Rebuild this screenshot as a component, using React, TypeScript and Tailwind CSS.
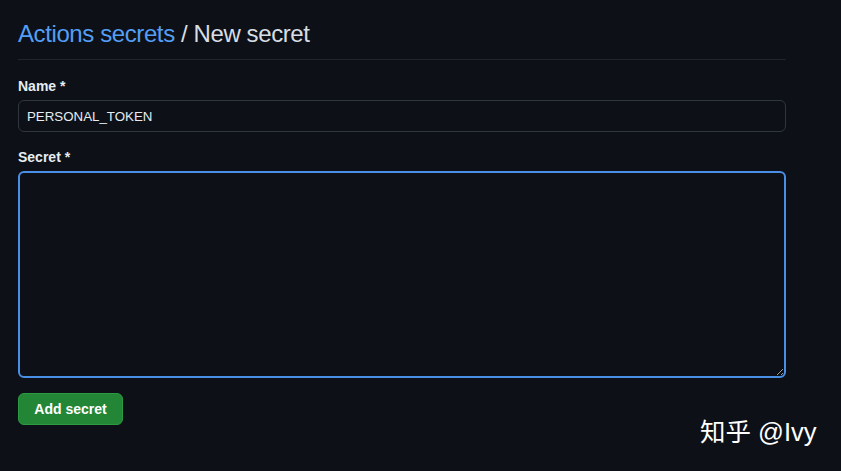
import React from 'react';

const App: React.FC = () => {
  return (
    <div
      className="relative w-[841px] h-[471px] overflow-hidden bg-[#0d1117] text-[#e6edf3]"
      style={{ fontFamily: '"Liberation Sans", Arial, "Noto Sans CJK SC", sans-serif' }}
    >
      <div className="w-[768px] ml-[18px] pt-[16px]">
        {/* Page heading */}
        <h2 className="text-[24px] leading-[36px] pb-[7px] border-b border-[#21262d] tracking-[-0.4px]">
          <a className="text-[#549ff5]">Actions secrets</a>
          <span className="text-[#d8dde3]"> / New secret</span>
        </h2>

        <form className="flex flex-col">
          <label className="mt-[16px] mb-[4px] text-[14px] leading-[20px] font-bold text-[#e6edf3]">Name *</label>
          <input
            readOnly
            value="PERSONAL_TOKEN"
            className="h-[32px] px-[8px] text-[13.3px] text-[#e6edf3] bg-[#0d1117] border border-[#30363d] rounded-[6px] outline-none"
          />

          <label className="mt-[15px] mb-[4px] text-[14px] leading-[20px] font-bold text-[#e6edf3]">Secret *</label>
          <textarea className="h-[207px] px-[8px] py-[5px] text-[13px] bg-[#0d1117] border-2 border-[#4a8fe6] rounded-[6px] outline-none" />

          <div className="mt-[15px]">
            <button
              type="button"
              className="h-[32px] w-[105px] rounded-[6px] bg-[#238636] border border-[#2c9a41] text-white text-[14px] font-bold"
            >
              Add secret
            </button>
          </div>
        </form>
      </div>

      {/* Watermark */}
      <div className="absolute left-[700px] top-[415px] text-[25.5px] leading-[34px] text-white">
        知乎 @Ivy
      </div>
    </div>
  );
};

export default App;
